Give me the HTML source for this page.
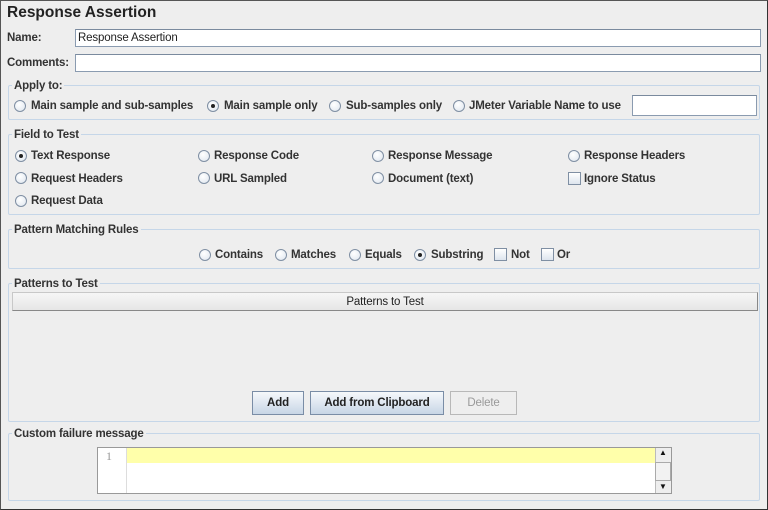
<!DOCTYPE html>
<html><head><meta charset="utf-8"><style>
*{box-sizing:border-box;margin:0;padding:0}
body{width:768px;height:510px;background:#eeeeee;font-family:"Liberation Sans",Arial,sans-serif;font-size:11.5px;letter-spacing:-0.15px;font-weight:bold;color:#333;position:relative;overflow:hidden}
.frame{position:absolute;left:0;top:0;width:768px;height:510px;border:1px solid #555;border-right-color:#333;border-bottom-color:#333}
.a{position:absolute;white-space:nowrap}
.inp{position:absolute;background:#fff;border:1px solid #8a9bb0;border-top-color:#7a8a9e}
.fs{position:absolute;border:1px solid #c5d6e8;border-radius:2px}
.lg{position:absolute;background:#eeeeee;padding:0 2px;line-height:14px;color:#333}
.r{position:absolute;width:12px;height:12px;border-radius:50%;border:1px solid #7f8fa3;background:radial-gradient(circle at 40% 35%,#fff,#dde5ee)}
.r.on::after{content:"";position:absolute;left:3px;top:3px;width:4px;height:4px;border-radius:50%;background:#222}
.c{position:absolute;width:13px;height:13px;border:1px solid #7f8fa3;background:linear-gradient(#fff,#dde5ee)}
.btn{position:absolute;height:24px;border:1px solid #7a8da6;background:linear-gradient(#f5f8fb,#c8d6e6);text-align:center;line-height:23px;color:#222}
</style></head><body>
<div class="frame"></div>
<div class="a" style="left:7px;top:4px;font-size:15.5px;color:#222;letter-spacing:0">Response Assertion</div>
<div class="a" style="left:7px;top:32px">Name:</div>
<div class="inp" style="left:75px;top:29px;width:686px;height:18px"></div>
<div class="a" style="left:78px;top:32px;font-weight:normal;color:#222">Response Assertion</div>
<div class="a" style="left:7px;top:57px">Comments:</div>
<div class="inp" style="left:75px;top:54px;width:686px;height:18px"></div>

<div class="fs" style="left:8px;top:85px;width:752px;height:35px"></div>
<div class="lg" style="left:12px;top:79px">Apply to:</div>
<div class="r" style="left:14px;top:100px"></div><div class="a" style="left:31px;top:100px">Main sample and sub-samples</div>
<div class="r on" style="left:207px;top:100px"></div><div class="a" style="left:224px;top:100px">Main sample only</div>
<div class="r" style="left:329px;top:100px"></div><div class="a" style="left:346px;top:100px">Sub-samples only</div>
<div class="r" style="left:453px;top:100px"></div><div class="a" style="left:469px;top:100px">JMeter Variable Name to use</div>
<div class="inp" style="left:632px;top:95px;width:125px;height:21px"></div>

<div class="fs" style="left:8px;top:134px;width:752px;height:81px"></div>
<div class="lg" style="left:12px;top:128px">Field to Test</div>
<div class="r on" style="left:15px;top:150px"></div><div class="a" style="left:31px;top:150px">Text Response</div>
<div class="r" style="left:198px;top:150px"></div><div class="a" style="left:214px;top:150px">Response Code</div>
<div class="r" style="left:372px;top:150px"></div><div class="a" style="left:388px;top:150px">Response Message</div>
<div class="r" style="left:568px;top:150px"></div><div class="a" style="left:584px;top:150px">Response Headers</div>
<div class="r" style="left:15px;top:172px"></div><div class="a" style="left:31px;top:173px">Request Headers</div>
<div class="r" style="left:198px;top:172px"></div><div class="a" style="left:214px;top:173px">URL Sampled</div>
<div class="r" style="left:372px;top:172px"></div><div class="a" style="left:388px;top:173px">Document (text)</div>
<div class="c" style="left:568px;top:172px"></div><div class="a" style="left:584px;top:173px">Ignore Status</div>
<div class="r" style="left:15px;top:195px"></div><div class="a" style="left:31px;top:195px">Request Data</div>

<div class="fs" style="left:8px;top:229px;width:752px;height:40px"></div>
<div class="lg" style="left:12px;top:223px">Pattern Matching Rules</div>
<div class="r" style="left:199px;top:249px"></div><div class="a" style="left:215px;top:249px">Contains</div>
<div class="r" style="left:275px;top:249px"></div><div class="a" style="left:291px;top:249px">Matches</div>
<div class="r" style="left:349px;top:249px"></div><div class="a" style="left:365px;top:249px">Equals</div>
<div class="r on" style="left:414px;top:249px"></div><div class="a" style="left:431px;top:249px">Substring</div>
<div class="c" style="left:494px;top:248px"></div><div class="a" style="left:511px;top:249px">Not</div>
<div class="c" style="left:541px;top:248px"></div><div class="a" style="left:557px;top:249px">Or</div>

<div class="fs" style="left:8px;top:283px;width:752px;height:139px"></div>
<div class="lg" style="left:12px;top:277px">Patterns to Test</div>
<div class="a" style="left:12px;top:292px;width:746px;height:19px;background:linear-gradient(#f6f6f6,#e6e6e6);border:1px solid #c8c8c8;border-right-color:#888;border-bottom-color:#888;text-align:center;line-height:19px;font-weight:normal;color:#222">Patterns to Test</div>
<div class="btn" style="left:252px;top:391px;width:52px">Add</div>
<div class="btn" style="left:310px;top:391px;width:134px">Add from Clipboard</div>
<div class="btn" style="left:450px;top:391px;width:67px;background:#eeeeee;border-color:#b8b8b8;color:#999;font-weight:normal">Delete</div>

<div class="fs" style="left:8px;top:433px;width:752px;height:68px"></div>
<div class="lg" style="left:12px;top:427px">Custom failure message</div>
<div class="a" style="left:97px;top:447px;width:575px;height:47px;background:#fff;border:1px solid #999"></div>
<div class="a" style="left:126px;top:448px;width:529px;height:15px;background:#ffffaa"></div>
<div class="a" style="left:126px;top:448px;width:1px;height:45px;background:#ddd"></div>
<div class="a" style="left:106px;top:449px;font-family:'Liberation Serif',serif;font-weight:normal;color:#999;font-size:12px">1</div>
<div class="a" style="left:655px;top:448px;width:16px;height:45px;background:#eee;border-left:1px solid #bbb"></div>
<div class="a" style="left:655px;top:462px;width:16px;height:19px;background:#f2f2f2;border:1px solid #aaa"></div>
<div class="a" style="left:659px;top:448px;font-size:8px;color:#111">▲</div>
<div class="a" style="left:659px;top:482px;font-size:8px;color:#111">▼</div>
</body></html>
